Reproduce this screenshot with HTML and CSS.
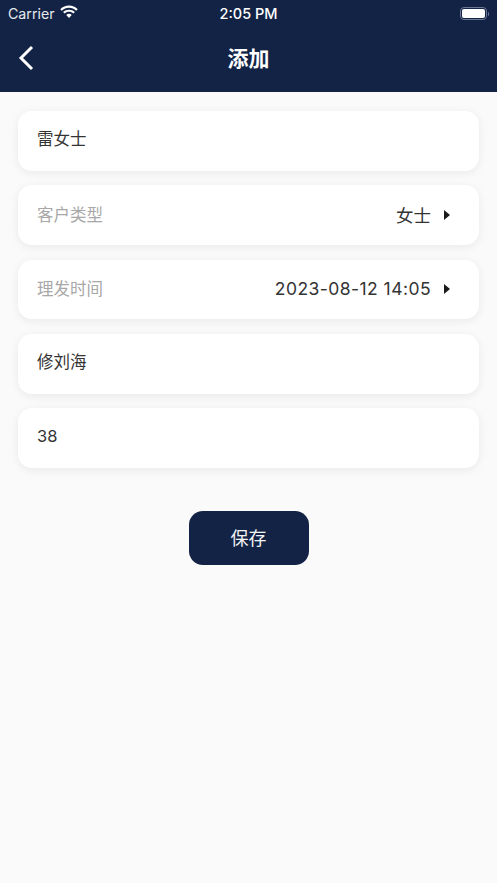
FILE: index.html
```html
<!DOCTYPE html>
<html lang="zh">
<head>
    <meta charset="UTF-8">
    <meta name="viewport" content="width=device-width, initial-scale=1.0">
    <title>添加</title>
    <link rel="stylesheet" href="styles.css">
</head>
<body>
    <div class="header">
        <div class="status-bar">
            <div class="status-left">
                <span class="carrier">Carrier</span>
                <svg class="wifi" width="20" height="15" viewBox="0 0 19 14">
                    <path d="M9.5 2.6c2.6 0 5 1 6.9 2.7l1.4-1.5C15.5 1.6 12.6.4 9.5.4S3.5 1.6 1.2 3.8l1.4 1.5C4.5 3.6 6.9 2.6 9.5 2.6z" fill="#fff"/>
                    <path d="M9.5 6.4c1.6 0 3 .6 4.2 1.6l1.4-1.5C13.6 5.1 11.6 4.3 9.5 4.3s-4.1.8-5.6 2.2L5.3 8C6.5 7 7.9 6.4 9.5 6.4z" fill="#fff"/>
                    <path d="M9.5 8.3c-1 0-1.9.4-2.6 1l2.6 2.9 2.6-2.9c-.7-.6-1.6-1-2.6-1z" fill="#fff"/>
                </svg>
            </div>
            <span class="clock">2:05 PM</span>
            <div class="battery">
                <div class="battery-body"><div class="battery-fill"></div></div>
                <div class="battery-cap"></div>
            </div>
        </div>
        <div class="nav-bar">
            <svg class="back" width="16" height="26" viewBox="0 0 16 26">
                <path d="M14 2 L3 13 L14 24" fill="none" stroke="#fff" stroke-width="3"/>
            </svg>
            <h1>添加</h1>
        </div>
    </div>

    <div class="form">
        <div class="row">
            <span class="text">雷女士</span>
        </div>
        <div class="row">
            <span class="label">客户类型</span>
            <div class="picker">
                <span class="value">女士</span>
                <span class="arrow"></span>
            </div>
        </div>
        <div class="row">
            <span class="label">理发时间</span>
            <div class="picker">
                <span class="value date">2023-08-12 14:05</span>
                <span class="arrow"></span>
            </div>
        </div>
        <div class="row">
            <span class="text">修刘海</span>
        </div>
        <div class="row">
            <span class="text number">38</span>
        </div>
    </div>

    <div class="actions">
        <button class="save">保存</button>
    </div>
</body>
</html>
```

FILE: styles.css
```css
* {
    margin: 0;
    padding: 0;
    box-sizing: border-box;
    font-family: "Inter", "Noto Sans CJK SC", sans-serif;
}

body {
    background: #fafafa;
    min-height: 883px;
}

.header {
    background: #132345;
    height: 91.5px;
    color: #fff;
}

.status-bar {
    height: 27px;
    padding: 0 8px;
    display: flex;
    align-items: center;
    justify-content: space-between;
    position: relative;
}

.status-left {
    display: flex;
    align-items: center;
    gap: 5px;
}

.carrier {
    font-size: 14.2px;
    color: #e8eaee;
}

.wifi {
    margin-top: -2px;
    margin-left: -1px;
}

.clock {
    font-size: 14.5px;
    font-weight: 500;
    position: absolute;
    left: 0;
    right: 0;
    text-align: center;
}

.battery {
    display: flex;
    align-items: center;
    gap: 1px;
}

.battery-body {
    width: 27px;
    height: 13px;
    border: 1px solid #6d7891;
    border-radius: 4px;
    padding: 1px;
}

.battery-fill {
    background: #fff;
    height: 100%;
    border-radius: 2px;
}

.battery-cap {
    width: 1.5px;
    height: 4px;
    background: #6d7891;
    border-radius: 0 1px 1px 0;
}

.nav-bar {
    height: 64px;
    display: flex;
    align-items: center;
    justify-content: center;
    position: relative;
}

.nav-bar h1 {
    font-size: 21px;
    font-weight: 700;
    margin-top: -5px;
}

.back {
    position: absolute;
    left: 18px;
    top: 18px;
}

.form {
    padding: 19.5px 18px 0;
    display: flex;
    flex-direction: column;
    gap: 14.6px;
}

.row {
    height: 59.7px;
    background: #fff;
    border-radius: 14px;
    box-shadow: 0 2px 10px rgba(0, 0, 0, 0.07);
    padding: 0 29px 0 19px;
    display: flex;
    align-items: center;
    justify-content: space-between;
}

.label {
    font-size: 16.5px;
    color: #a8a8a8;
    margin-top: -2px;
}

.text {
    font-size: 16.5px;
    color: #333;
    margin-top: -6px;
}

.number {
    margin-top: -3px;
}

.value {
    font-size: 17.5px;
    color: #333;
    margin-top: -2px;
}

.date {
    letter-spacing: 0.45px;
}

.picker {
    display: flex;
    align-items: center;
    gap: 13px;
}

.arrow {
    width: 0;
    height: 0;
    border-left: 6px solid #1a1a1a;
    border-top: 5.5px solid transparent;
    border-bottom: 5.5px solid transparent;
    margin-top: -1px;
}

.actions {
    display: flex;
    justify-content: center;
    padding-top: 43px;
}

.save {
    width: 120px;
    height: 54px;
    background: #132345;
    color: #f2f3f5;
    border: none;
    border-radius: 14px;
    font-size: 18px;
    padding-bottom: 2px;
}
```
